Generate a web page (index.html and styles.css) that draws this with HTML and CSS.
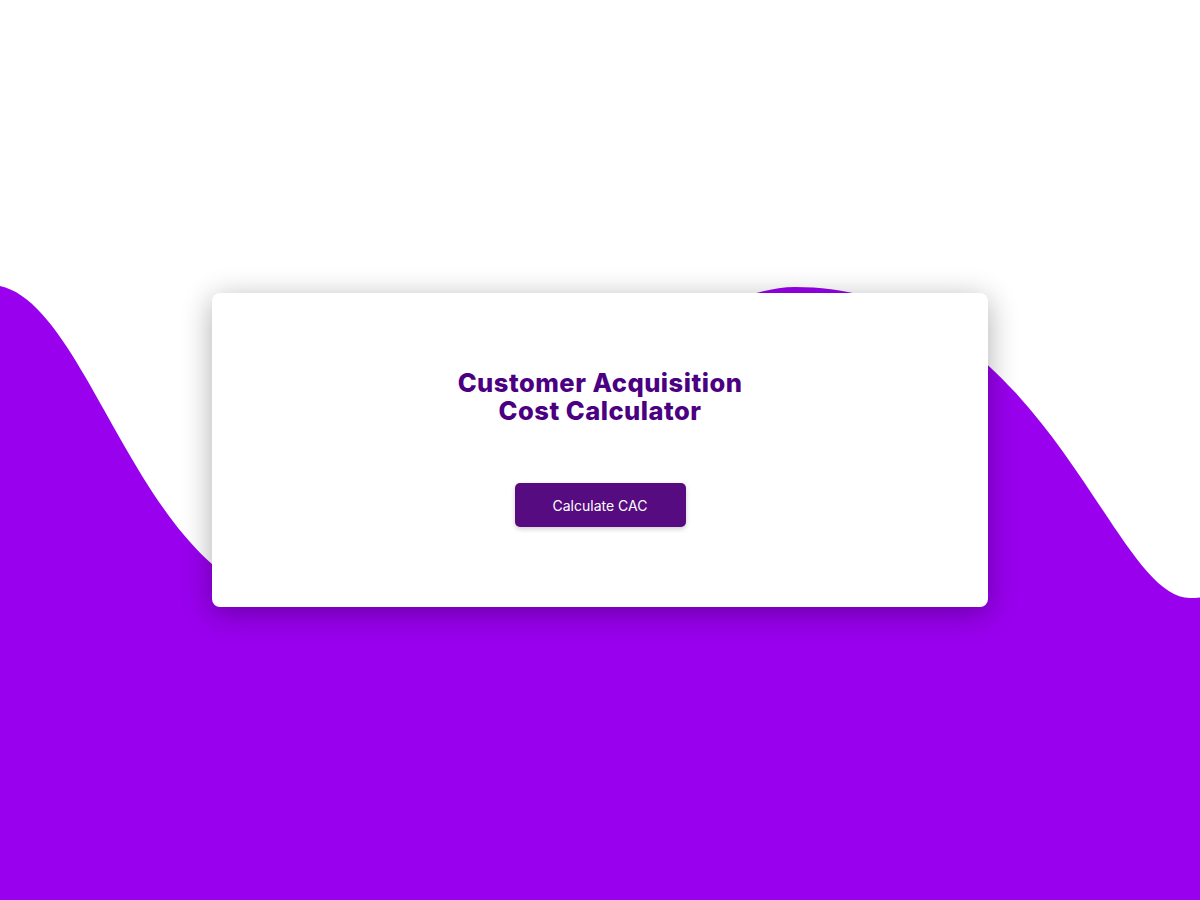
FILE: index.html
```html
<!DOCTYPE html>
<html lang="en">
<head>
<meta charset="utf-8">
<title>Customer Acquisition Cost Calculator</title>
<link rel="stylesheet" href="styles.css">
</head>
<body>
<main class="stage">
  <svg class="wave" viewBox="0 0 1200 900" preserveAspectRatio="none" aria-hidden="true">
    <path d="M-10,285 C90,285 140,600 300,600 C450,600 645,287 795,287 C1045,287 1110,598 1190,598 C1230,598 1270,570 1300,540 L1300,900 L-10,900 Z" fill="#9900ee"/>
  </svg>
  <section class="card">
    <h1 class="card-title">Customer Acquisition Cost Calculator</h1>
    <button class="btn-primary" type="button">Calculate CAC</button>
  </section>
</main>
</body>
</html>
```

FILE: styles.css
```css
* {
  box-sizing: border-box;
}

html,
body {
  margin: 0;
  height: 100%;
  background: #ffffff;
  font-family: Inter, "Noto Sans", "Liberation Sans", sans-serif;
}

.stage {
  display: grid;
  height: 100vh;
  width: 100%;
  overflow: hidden;
}

.wave,
.card {
  grid-area: 1 / 1;
}

.wave {
  width: 100%;
  height: 100%;
  display: block;
}

.card {
  place-self: center;
  width: 776px;
  height: 314px;
  background: #ffffff;
  border-radius: 8px;
  box-shadow: 0 6px 30px rgba(0, 0, 0, 0.32);
  display: flex;
  flex-direction: column;
  align-items: center;
  padding-top: 76px;
  gap: 58px;
  position: relative;
}

.card-title {
  margin: 0;
  max-width: 320px;
  text-align: center;
  font-size: 25.5px;
  line-height: 28px;
  font-weight: 800;
  letter-spacing: 0.5px;
  color: #4b0082;
}

.btn-primary {
  width: 171px;
  height: 44px;
  border: none;
  border-radius: 5px;
  background: #560b80;
  color: #ffffff;
  font-family: Inter, "Noto Sans", "Liberation Sans", sans-serif;
  font-size: 14px;
  box-shadow: 0 2px 5px rgba(0, 0, 0, 0.2);
  cursor: pointer;
}
```
